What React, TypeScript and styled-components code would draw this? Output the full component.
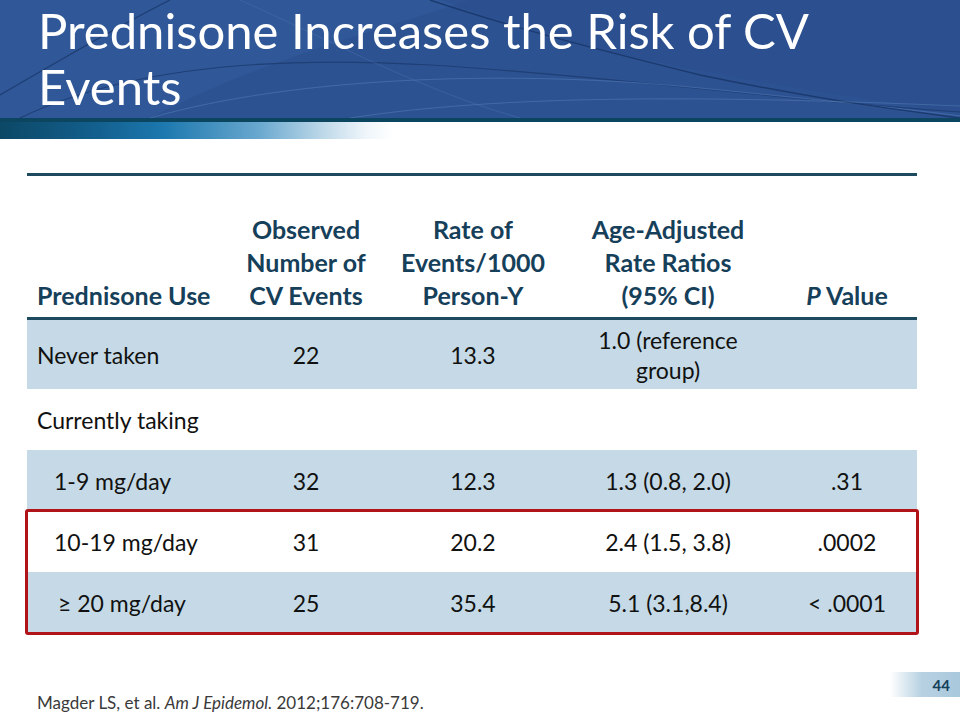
import React from 'react';
import styled, { createGlobalStyle } from 'styled-components';

const GlobalStyle = createGlobalStyle`
  html, body {
    margin: 0;
    padding: 0;
    background: #ffffff;
  }
`;

type RowData = {
  label: string;
  n: string;
  rate: string;
  ratio: React.ReactNode;
  p: string;
  shade: boolean;
  indent: number;
  tall?: boolean;
};

const rows: RowData[] = [
  {
    label: 'Never taken',
    n: '22',
    rate: '13.3',
    ratio: (
      <>
        1.0 (reference
        <br />
        group)
      </>
    ),
    p: '',
    shade: true,
    indent: 0,
    tall: true,
  },
  { label: 'Currently taking', n: '', rate: '', ratio: '', p: '', shade: false, indent: 0 },
  { label: '1-9 mg/day', n: '32', rate: '12.3', ratio: '1.3 (0.8, 2.0)', p: '.31', shade: true, indent: 17 },
];

const boxed: RowData[] = [
  { label: '10-19 mg/day', n: '31', rate: '20.2', ratio: '2.4 (1.5, 3.8)', p: '.0002', shade: false, indent: 17 },
  { label: '\u2265 20 mg/day', n: '25', rate: '35.4', ratio: '5.1 (3.1,8.4)', p: '< .0001', shade: true, indent: 21 },
];

const HeaderWaves = () => (
  <Waves viewBox="0 0 960 118" preserveAspectRatio="none">
    <path d="M0 0 H470 C380 30 260 60 150 118 H0 Z" fill="#3560a0" opacity="0.45" />
    <path d="M440 0 C560 40 650 70 960 112 V0 Z" fill="#2a4f8e" opacity="0.6" />
    <path d="M0 95 C60 60 120 25 170 0" stroke="#1d3d72" strokeWidth="1.2" fill="none" />
    <path d="M20 118 C120 70 260 55 430 65 C600 75 780 100 960 112" stroke="#1f3f75" strokeWidth="1.2" fill="none" />
    <path d="M150 118 C300 75 520 70 700 88 C820 100 900 108 960 116" stroke="#4a74b0" strokeWidth="1" fill="none" opacity="0.7" />
    <path d="M430 0 C520 30 600 50 700 75 C820 100 900 110 960 118" stroke="#1b3a6e" strokeWidth="1.4" fill="none" />
    <path d="M350 118 C500 95 700 95 960 106" stroke="#5a82ba" strokeWidth="0.8" fill="none" opacity="0.6" />
    <path d="M240 0 C330 40 420 90 520 118" stroke="#4b75b2" strokeWidth="0.8" fill="none" opacity="0.5" />
  </Waves>
);

const Row = ({ r }: { r: RowData }) => (
  <BodyRow $shade={r.shade} $tall={!!r.tall}>
    <LabelCell style={{ paddingLeft: 10 + r.indent }}>{r.label}</LabelCell>
    <Cell>{r.n}</Cell>
    <Cell>{r.rate}</Cell>
    <Cell>{r.ratio}</Cell>
    <PCell>{r.p}</PCell>
  </BodyRow>
);

const App = () => {
  return (
    <Slide>
      <GlobalStyle />
      <Header>
        <HeaderWaves />
        <Title>Prednisone Increases the Risk of CV Events</Title>
      </Header>
      <Rule />
      <Stripe />

      <Table>
        <HeadRow>
          <HeadCell $left>Prednisone Use</HeadCell>
          <HeadCell>
            Observed
            <br />
            Number of
            <br />
            CV Events
          </HeadCell>
          <HeadCell>
            Rate of
            <br />
            Events/1000
            <br />
            Person-Y
          </HeadCell>
          <HeadCell>
            Age-Adjusted
            <br />
            Rate Ratios
            <br />
            (95% CI)
          </HeadCell>
          <HeadCell $last>
            <i>P</i>&nbsp;Value
          </HeadCell>
        </HeadRow>
        {rows.map((r) => (
          <Row key={r.label} r={r} />
        ))}
        <Highlight>
          {boxed.map((r) => (
            <Row key={r.label} r={r} />
          ))}
        </Highlight>
      </Table>

      <Footer>
        <Citation>
          Magder LS, et al. <i>Am J Epidemol.</i> 2012;176:708-719.
        </Citation>
        <PageNum>44</PageNum>
      </Footer>
    </Slide>
  );
};

const Slide = styled.div`
  width: 960px;
  height: 720px;
  overflow: hidden;
  display: flex;
  flex-direction: column;
  font-family: Lato, 'Open Sans', sans-serif;
  background: #ffffff;
`;

const Header = styled.div`
  position: relative;
  height: 118px;
  background: #2d5292;
  overflow: hidden;
  box-sizing: border-box;
  padding: 2px 0 0 38px;
`;

const Waves = styled.svg`
  position: absolute;
  inset: 0;
  width: 100%;
  height: 100%;
`;

const Title = styled.h1`
  position: relative;
  margin: 0;
  width: 820px;
  color: #ffffff;
  font-family: Lato, 'Open Sans', sans-serif;
  font-weight: 400;
  font-size: 49px;
  line-height: 56px;
`;

const Rule = styled.div`
  height: 4px;
  background: #0b4560;
`;

const Stripe = styled.div`
  height: 17px;
  background: linear-gradient(
    90deg,
    #0c4866 0%,
    #135f8e 10%,
    #1c78ae 17%,
    #6aa8cf 27%,
    #c2dbea 34%,
    #eef5fa 38%,
    #ffffff 41%
  );
`;

const Table = styled.div`
  margin: 34px 0 0 27px;
  width: 890px;
  border-top: 3px solid #1d4a5e;
`;

const grid = `
  display: grid;
  grid-template-columns: 213px 132px 202px 188px 155px;
`;

const HeadRow = styled.div`
  ${grid};
  height: 144px;
  align-items: end;
  border-bottom: 3px solid #1d4a5e;
  box-sizing: border-box;
`;

const HeadCell = styled.div<{ $left?: boolean; $last?: boolean }>`
  color: #16405a;
  font-weight: 700;
  font-size: 25px;
  line-height: 33px;
  white-space: nowrap;
  text-align: ${(p) => (p.$left ? 'left' : 'center')};
  padding-bottom: 5px;
  padding-left: ${(p) => (p.$left ? '10px' : p.$last ? '15px' : '0')};
  box-sizing: border-box;
`;

const BodyRow = styled.div<{ $shade: boolean; $tall: boolean }>`
  ${grid};
  height: ${(p) => (p.$tall ? '69px' : '61px')};
  align-items: center;
  background: ${(p) => (p.$shade ? '#c5dae6' : '#ffffff')};
  color: #111111;
  font-size: 23px;
  line-height: 30px;
`;

const Cell = styled.div`
  text-align: center;
  white-space: nowrap;
`;

const LabelCell = styled.div`
  text-align: left;
  white-space: pre;
`;

const PCell = styled.div`
  text-align: center;
  padding-left: 15px;
`;

const Highlight = styled.div`
  position: relative;

  &::after {
    content: '';
    position: absolute;
    top: -2px;
    left: -2px;
    right: -2px;
    bottom: -2px;
    border: 3px solid #b01419;
    border-radius: 3px;
    pointer-events: none;
  }
`;

const Footer = styled.div`
  margin-top: auto;
  height: 62px;
  display: flex;
  align-items: flex-start;
  justify-content: space-between;
`;

const Citation = styled.div`
  margin: 34px 0 0 37px;
  color: #3a3a3a;
  font-size: 17px;
`;

const PageNum = styled.div`
  margin-top: 14px;
  width: 70px;
  height: 25px;
  box-sizing: border-box;
  padding-right: 10px;
  display: flex;
  align-items: center;
  justify-content: flex-end;
  background: linear-gradient(90deg, rgba(170, 200, 220, 0) 0%, #b7d1e2 45%, #a9c8dc 100%);
  color: #15405a;
  font-weight: 700;
  font-size: 15px;
`;

export default App;
